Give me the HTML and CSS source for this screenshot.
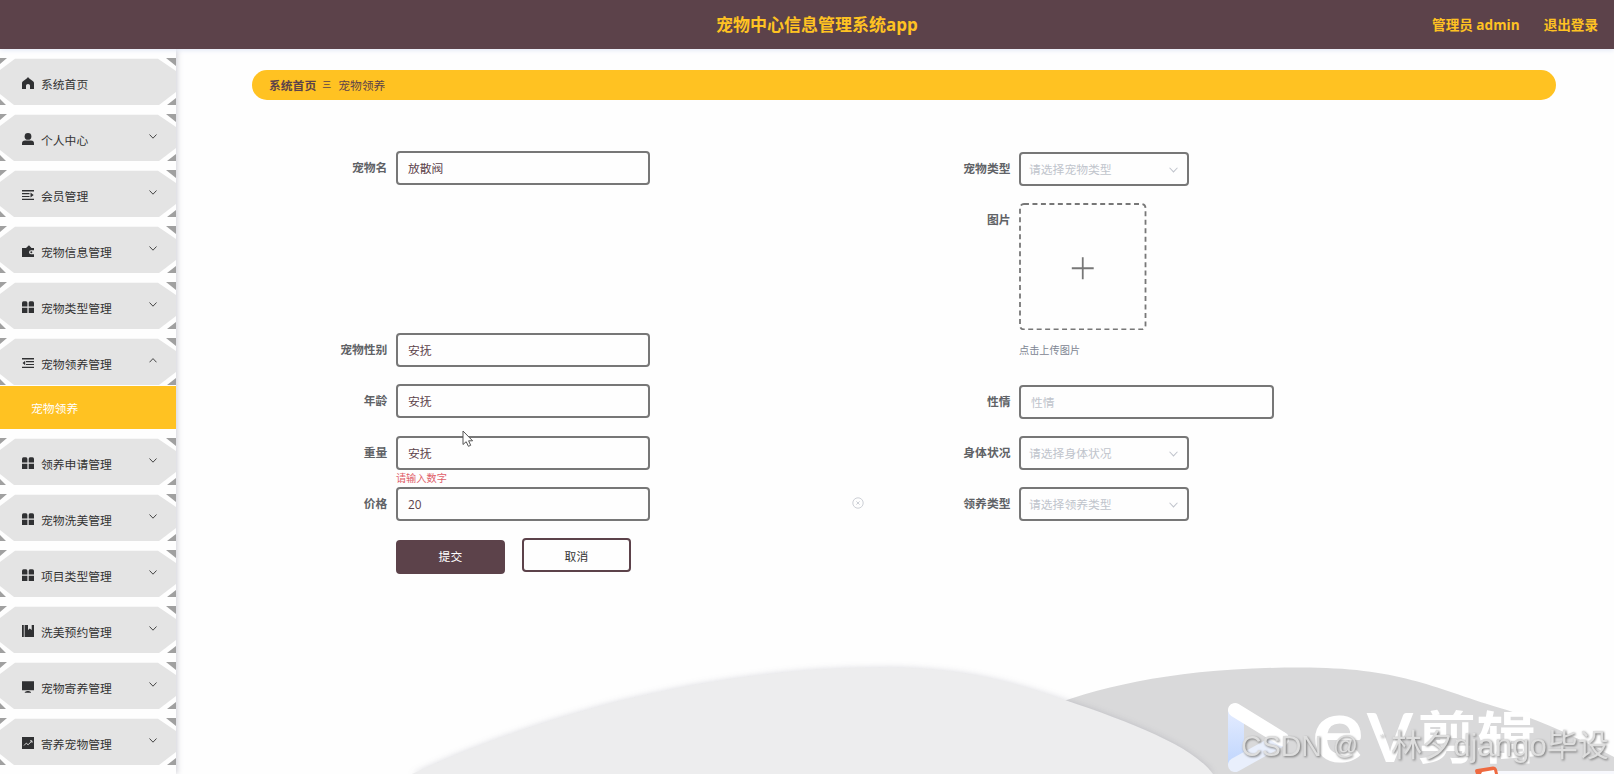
FILE: index.html
```
<!DOCTYPE html>
<html lang="zh-CN">
  <head>
    <meta charset="utf-8">
    <title>宠物中心信息管理系统app</title>
    <link rel="stylesheet" href="styles.css">
  </head>
  <body>
    <svg class="sprite">
      <symbol id="home" viewBox="0 0 12 12"><path d="M6 0 L7 1.2 L11 4.3 Q12 5.1 12 6 V12 H8 V8.5 Q8 7 6 7 Q4 7 4 8.5 V12 H0 V6 Q0 5.1 1 4.3 L5 1.2 Z"/></symbol>
      <symbol id="user" viewBox="0 0 12 12"><circle cx="6" cy="3.4" r="3.4"/><path d="M0 12 V10.5 Q0 7.6 3 7.6 H9 Q12 7.6 12 10.5 V12 Q12 12.2 11 12.4 H1 Z"/></symbol>
      <symbol id="unfold" viewBox="0 0 12 12"><path d="M0 1h12v1.4H0zM0 4.1h7.5v1.2H0zM0 6.9h7.5v1.2H0zM0 9.7h12v1.4H0zM8.5 3.6l3.2 2.5-3.2 2.5z"/></symbol>
      <symbol id="fold" viewBox="0 0 12 12"><path d="M0 1h12v1.4H0zM4 4.1h8v1.2H4zM4 6.9h8v1.2H4zM0 9.7h12v1.4H0zM3.2 3.7v4.6L.5 6z"/></symbol>
      <symbol id="wallet" viewBox="0 0 12 12"><path d="M0 3h4l3-2.7L9.5 3H12v2.2H9a2 2 0 0 0 0 4h3V12H0z"/><circle cx="9.3" cy="7.2" r="1"/></symbol>
      <symbol id="menu" viewBox="0 0 12 12"><path d="M0 5.4V2Q0 .3 1.5 .3H4Q5.4 .3 5.4 2V5.4zM6.7 5.4V2Q6.7 .3 8 .3h2.5Q12 .3 12 2V5.4zM0 6.7h5.4V12H0zM6.7 6.7H12V12H6.7z"/></symbol>
      <symbol id="book" viewBox="0 0 12 12"><path d="M0 0h1.8v12H0zM2.6 0H6v5l1.8-1.4L9.7 5V0H12v12H2.6z"/></symbol>
      <symbol id="monitor" viewBox="0 0 12 12"><path d="M0 .3h12v9H0zM5 10h2l2 1v.8H2.8V11z"/></symbol>
      <symbol id="chart" viewBox="0 0 12 12"><path d="M0 0h12v12H0z"/><path class="line" d="M2 8.5l2.3-2.4 1.8 1.7L9.8 4M8 3.8h2v2"/></symbol>
      <symbol id="down" viewBox="0 0 8 5"><path class="stroke" d="M.5 .5L4 4.2 7.5 .5"/></symbol>
      <symbol id="up" viewBox="0 0 8 5"><path class="stroke" d="M.5 4.3L4 .6l3.5 3.7"/></symbol>
    </svg>

    <header class="header">
      <h1 class="title">宠物中心信息管理系统app</h1>
      <div class="right-menu"><span>管理员 admin</span><span>退出登录</span></div>
    </header>

    <div class="container">
      <aside class="sidebar">
        <div class="menu-item"><svg class="icon"><use href="#home"/></svg><span>系统首页</span></div>
        <div class="menu-item"><svg class="icon"><use href="#user"/></svg><span>个人中心</span><svg class="arrow"><use href="#down"/></svg></div>
        <div class="menu-item"><svg class="icon"><use href="#unfold"/></svg><span>会员管理</span><svg class="arrow"><use href="#down"/></svg></div>
        <div class="menu-item"><svg class="icon"><use href="#wallet"/></svg><span>宠物信息管理</span><svg class="arrow"><use href="#down"/></svg></div>
        <div class="menu-item"><svg class="icon"><use href="#menu"/></svg><span>宠物类型管理</span><svg class="arrow"><use href="#down"/></svg></div>
        <div class="menu-item open"><svg class="icon"><use href="#fold"/></svg><span>宠物领养管理</span><svg class="arrow"><use href="#up"/></svg></div>
        <div class="submenu">宠物领养</div>
        <div class="menu-item"><svg class="icon"><use href="#menu"/></svg><span>领养申请管理</span><svg class="arrow"><use href="#down"/></svg></div>
        <div class="menu-item"><svg class="icon"><use href="#menu"/></svg><span>宠物洗美管理</span><svg class="arrow"><use href="#down"/></svg></div>
        <div class="menu-item"><svg class="icon"><use href="#menu"/></svg><span>项目类型管理</span><svg class="arrow"><use href="#down"/></svg></div>
        <div class="menu-item"><svg class="icon"><use href="#book"/></svg><span>洗美预约管理</span><svg class="arrow"><use href="#down"/></svg></div>
        <div class="menu-item"><svg class="icon"><use href="#monitor"/></svg><span>宠物寄养管理</span><svg class="arrow"><use href="#down"/></svg></div>
        <div class="menu-item"><svg class="icon"><use href="#chart"/></svg><span>寄养宠物管理</span><svg class="arrow"><use href="#down"/></svg></div>
      </aside>

      <main class="main">
        <div class="breadcrumb"><b>系统首页</b><span class="sep">三</span><span>宠物领养</span></div>

        <div class="form">
          <div class="col">
            <div class="form-item name"><label>宠物名</label><div class="input">放散阀</div></div>
            <div class="form-item"><label>宠物性别</label><div class="input">安抚</div></div>
            <div class="form-item"><label>年龄</label><div class="input">安抚</div></div>
            <div class="form-item"><label>重量</label><div class="input">安抚</div><div class="error">请输入数字</div></div>
            <div class="form-item"><label>价格</label><div class="input">20</div>
              <svg class="clear" viewBox="0 0 12 12"><circle cx="6" cy="6" r="5.2"/><path d="M4.4 4.4l3.2 3.2M7.6 4.4L4.4 7.6"/></svg>
            </div>
            <div class="buttons"><div class="btn submit">提交</div><div class="btn cancel">取消</div></div>
          </div>
          <div class="col col-right">
            <div class="form-item"><label>宠物类型</label><div class="select">请选择宠物类型<svg class="caret"><use href="#down"/></svg></div></div>
            <div class="form-item picture">
              <label>图片</label>
              <div>
                <svg class="upload" viewBox="0 0 128 128"><rect x="1" y="1" width="126" height="126" rx="4"/><path d="M53 65.5h22M64 54.5v22"/></svg>
                <div class="tip">点击上传图片</div>
              </div>
            </div>
            <div class="form-item"><label>性情</label><div class="input empty">性情</div></div>
            <div class="form-item"><label>身体状况</label><div class="select">请选择身体状况<svg class="caret"><use href="#down"/></svg></div></div>
            <div class="form-item"><label>领养类型</label><div class="select">请选择领养类型<svg class="caret"><use href="#down"/></svg></div></div>
          </div>
        </div>
      </main>
    </div>

    <!-- hills at the bottom of the page -->
    <svg class="hills" viewBox="0 0 1214 124">
      <path class="hill-back" d="M640 60C700 36 780 17.5 900 17.5C1000 17.5 1030 37 1100 58C1150 73 1180 90 1214 107V124H640Z"/>
      <path class="hill-front" d="M12 124C90 88 180 59 250 44C330 26 410 17.5 484 17.5C560 17.5 610 31 665 50C730 72 793 96 813 124Z"/>
    </svg>

    <svg class="watermark" viewBox="0 0 414 114">
      <defs>
        <linearGradient id="blue" x1="0" y1="0" x2="0" y2="1"><stop offset="0" stop-color="#e4ecff"/><stop offset="1" stop-color="#bfd5fd"/></linearGradient>
      </defs>
      <path fill="url(#blue)" d="M28 50h16v46l-16 10z"/>
      <path class="play-low" d="M35 105L82 79"/>
      <path class="play-top" d="M35 50L82 79"/>
      <text class="ev" x="112" y="102" font-size="90" textLength="52" lengthAdjust="spacingAndGlyphs">e</text>
      <text class="ev" x="167" y="102" font-size="66" textLength="46" lengthAdjust="spacingAndGlyphs">V</text>
      <text class="ev" x="217" y="98" font-size="56" textLength="119" lengthAdjust="spacingAndGlyphs">剪辑</text>
      <path fill="#f7f8fd" d="M297 111h117v3H297z"/>
      <path fill="#ee6a40" d="M275 111q0-2 2-2l16-2.5q3 0 4 3l1 4.5h-22z"/>
      <path fill="#fff" d="M281 114l1-2 12-2 1 4z"/>
      <text class="csdn" x="41" y="96" font-size="29" textLength="81" lengthAdjust="spacingAndGlyphs">CSDN</text>
      <text class="csdn" x="133" y="94" font-size="26" textLength="25" lengthAdjust="spacingAndGlyphs">@</text>
      <text class="csdn" x="180" y="86" font-size="14">゛</text>
      <text class="csdn" x="191" y="96" font-size="31" textLength="218" lengthAdjust="spacingAndGlyphs">林夕django毕设</text>
    </svg>

    <svg class="cursor" viewBox="0 0 12 18"><path d="M1 1v13.5l3.2-2.8 2.2 4.6 2.3-1-2.1-4.5h4z"/></svg>
  </body>
</html>
```

FILE: styles.css
```
* {
  box-sizing: border-box;
}
body {
  margin: 0;
  height: 774px;
  overflow: hidden;
  position: relative;
  background: #fefefe;
  font-family: "Open Sans", "Noto Sans CJK SC", sans-serif;
  font-size: 11.8px;
  color: #333;
}
.sprite {
  display: none;
}

.header {
  position: relative;
  z-index: 1;
  height: 49px;
  padding: 0 16px 0 36px;
  background: #5c424a;
  color: #ffc222;
  display: grid;
  grid-template-columns: 1fr auto 1fr;
  align-items: center;
  box-shadow: 0 1px 5px #dfe6f5;
}
.title {
  grid-column: 2;
  margin: 0;
  font-size: 17px;
  line-height: 46px;
}
.right-menu {
  display: flex;
  justify-content: flex-end;
  gap: 24px;
  font-size: 13.6px;
  font-weight: bold;
  line-height: 46px;
}

.container {
  display: flex;
  height: 725px;
}
.sidebar {
  width: 176px;
  flex: none;
  padding-top: 9px;
  overflow: hidden;
  background: #fefefe;
  box-shadow: 1px 0 6px #ccccd4;
}
.menu-item {
  height: 47px;
  margin-bottom: 9px;
  padding: 5px 19px 0 22px;
  display: flex;
  align-items: center;
  background: url("data:image/svg+xml,%3Csvg xmlns='http://www.w3.org/2000/svg' width='176' height='47'%3E%3Cpath fill='%23e4e4e4' d='M15 .7H158L176 13V34L159 47H14L0 36V12z'/%3E%3Cpath fill='%23a0a0a0' d='M0 0H7L0 6zM166 0H176V8zM0 41L6 47H0zM176 40V47H167z'/%3E%3C/svg%3E") no-repeat;
}
.menu-item span {
  margin-bottom: 1px;
  line-height: 20px;
}
.open {
  margin-bottom: 1px;
}
.icon {
  width: 12px;
  height: 12px;
  margin-right: 7px;
  margin-bottom: 2px;
  overflow: visible;
  fill: #303133;
}
.line {
  fill: none;
  stroke: #e4e4e4;
  stroke-width: .9;
}
.stroke {
  fill: none;
  stroke: currentColor;
  stroke-width: .9;
}
.arrow {
  width: 8px;
  height: 5px;
  margin-left: auto;
  margin-bottom: 8px;
}
.submenu {
  height: 43px;
  margin-bottom: 9px;
  padding-left: 31px;
  line-height: 44px;
  background: #ffc222;
  color: #fff;
}

.main {
  flex: 1;
  padding: 21px 58px 0 76px;
}
.breadcrumb {
  height: 30px;
  border-radius: 15px;
  padding: 0 0 1px 17px;
  display: flex;
  align-items: center;
  background: #ffc222;
  color: #5c424a;
}
.sep {
  margin: 0 7px 0 6px;
  font-size: 9px;
}
.form {
  display: flex;
  padding-top: 51px;
}
.col {
  width: 622.5px;
  margin-left: -.6px;
}
.col-right {
  margin-left: .6px;
  padding-top: .7px;
}
.form-item {
  position: relative;
  display: flex;
  height: 34px;
  margin-bottom: 17.3px;
}
.name {
  margin-bottom: 148px;
}
label {
  width: 144.5px;
  padding-right: 8.5px;
  text-align: right;
  line-height: 33px;
  font-weight: 700;
  color: #606266;
}
.input,
.select {
  width: 254.5px;
  height: 34px;
  padding-left: 10px;
  border: 2px solid #777;
  border-radius: 4px;
  line-height: 30px;
  color: #5c424a;
}
.select {
  width: 170px;
  padding: 0 9px 0 8px;
  display: flex;
  align-items: center;
  color: #c0c4cc;
}
.empty {
  color: #c0c4cc;
}
.caret {
  width: 9px;
  height: 6px;
  margin-left: auto;
  margin-top: 2px;
}
.error {
  position: absolute;
  left: 144.5px;
  top: 35px;
  font-size: 10.2px;
  line-height: 14px;
  color: #e0606a;
}
.clear {
  width: 12px;
  height: 12px;
  margin: 10px 10px 0 auto;
  fill: none;
  stroke: #c0c4cc;
  stroke-width: .8;
}
.picture {
  height: 164.5px;
}
.upload {
  display: block;
  width: 127.5px;
  height: 127.5px;
  fill: none;
  stroke: #777;
  stroke-width: 1.8;
}
.upload rect {
  stroke-dasharray: 5 3.5;
}
.tip {
  margin-top: 13px;
  font-size: 10.2px;
  line-height: 15px;
  color: #7d8592;
}
.buttons {
  display: flex;
  gap: 17px;
  padding-left: 144.5px;
}
.btn {
  width: 109px;
  height: 34px;
  border: 2px solid #5c424a;
  border-radius: 4px;
  text-align: center;
  line-height: 32px;
}
.submit {
  margin-top: 2px;
  line-height: 29px;
  background: #5c424a;
  color: #fff;
}

.hills {
  position: absolute;
  left: 400px;
  bottom: 0;
  width: 1214px;
  height: 124px;
}
.hill-back {
  fill: #d9d9da;
}
.hill-front {
  fill: #ededee;
  filter: drop-shadow(0 0 3px rgba(60, 60, 90, .18));
}
.watermark {
  position: absolute;
  right: 0;
  bottom: 0;
  width: 414px;
  height: 114px;
  overflow: visible;
}
.play-top,
.play-low {
  fill: none;
  stroke: #fff;
  stroke-width: 14;
  stroke-linecap: round;
}
.play-low {
  stroke: #e9effc;
}
.ev {
  font-family: Lato, "Noto Sans CJK SC", sans-serif;
  font-weight: bold;
  fill: #fff;
}
.csdn {
  font-family: "Liberation Sans", "Noto Sans CJK SC", sans-serif;
  fill: #dedede;
  filter: drop-shadow(1px 1px 1px #777);
}
.cursor {
  position: absolute;
  left: 462px;
  top: 430px;
  width: 12px;
  height: 18px;
  fill: #fff;
  stroke: #555;
}
```
